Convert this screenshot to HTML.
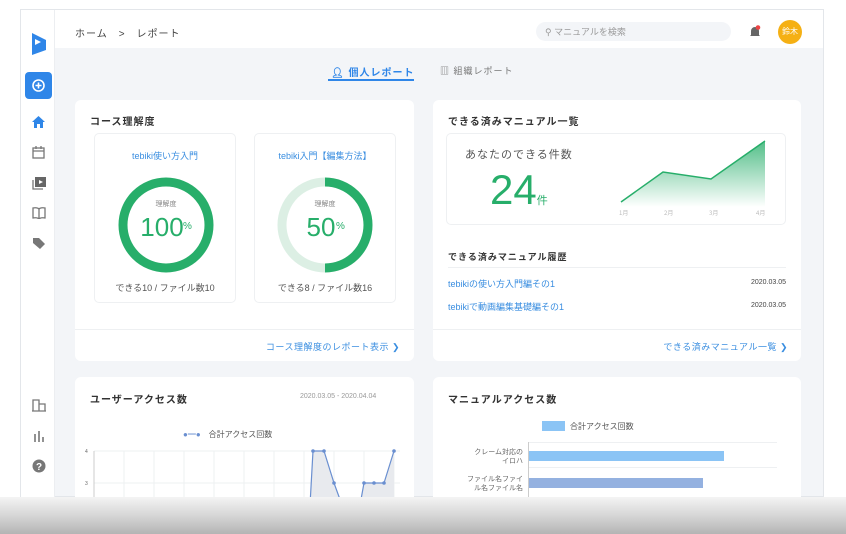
<!DOCTYPE html>
<html><head><meta charset="utf-8"><style>
*{margin:0;padding:0;box-sizing:border-box}
body{width:846px;height:534px;background:#fff;position:relative;overflow:hidden;font-family:"Liberation Sans","Noto Sans CJK JP",sans-serif;color:#333}
.a{position:absolute}
.card{position:absolute;background:#fff;border-radius:6px}
.t{font-size:10px;font-weight:bold;color:#333;letter-spacing:1px}
.blue{color:#3a8ee0}
</style></head><body>
<div class="a" style="left:20px;top:9px;width:804px;height:488px;border:1px solid #e3e6ea;background:#f3f5f8"></div>
<div class="a" style="left:21px;top:10px;width:34px;height:487px;background:#fff;border-right:1px solid #eceef1"></div>
<div class="a" style="left:55px;top:10px;width:768px;height:38px;background:#fff"></div>
<svg class="a" style="left:31px;top:32px" width="16" height="24" viewBox="0 0 16 24"><path d="M1 1 L15 8 L15 18 L1 23 Z" fill="#2f86e8"/><path d="M4 7 L10 10 L4 13Z" fill="#fff"/></svg>
<div class="a" style="left:25px;top:72px;width:27px;height:27px;background:#2f86e8;border-radius:4px"></div>
<svg class="a" style="left:31px;top:78px" width="15" height="15" viewBox="0 0 15 15"><circle cx="7.5" cy="7.5" r="5.5" fill="none" stroke="#fff" stroke-width="1.6"/><path d="M7.5 4.5v6M4.5 7.5h6" stroke="#fff" stroke-width="1.6"/></svg>
<svg class="a" style="left:32px;top:116px" width="13" height="12" viewBox="0 0 13 12"><path d="M6.5 0L0 6h2v6h3V8h3v4h3V6h2z" fill="#2f86e8"/></svg>
<svg class="a" style="left:32px;top:146px" width="13" height="13" viewBox="0 0 13 13"><rect x="1" y="2" width="11" height="10" fill="none" stroke="#777" stroke-width="1.3"/><path d="M1 5h11M4 0v3M9 0v3" stroke="#777" stroke-width="1.3"/></svg>
<svg class="a" style="left:32px;top:177px" width="14" height="13" viewBox="0 0 14 13"><rect x="3" y="0" width="11" height="10" fill="#666"/><path d="M1 3v9h10" fill="none" stroke="#777" stroke-width="1.3"/><path d="M7 3l4 2-4 2z" fill="#fff"/></svg>
<svg class="a" style="left:32px;top:207px" width="14" height="12" viewBox="0 0 14 12"><path d="M7 2C5 0 2 1 1 1v10c1 0 4-1 6 1 2-2 5-1 6-1V1C12 1 9 0 7 2zM7 2v10" fill="none" stroke="#777" stroke-width="1.3"/></svg>
<svg class="a" style="left:32px;top:237px" width="14" height="13" viewBox="0 0 14 13"><path d="M1 1h6l6 6-5 5-7-6z" fill="#777"/></svg>
<svg class="a" style="left:32px;top:399px" width="14" height="13" viewBox="0 0 14 13"><path d="M1 12V1h6v11M7 5h6v7M0 12h14" fill="none" stroke="#777" stroke-width="1.3"/></svg>
<svg class="a" style="left:33px;top:430px" width="12" height="12" viewBox="0 0 12 12"><path d="M2 4v8M6 1v11M10 7v5" stroke="#777" stroke-width="1.6"/></svg>
<svg class="a" style="left:32px;top:459px" width="14" height="14" viewBox="0 0 14 14"><circle cx="7" cy="7" r="6.5" fill="#777"/><text x="7" y="11" font-size="10" font-weight="bold" fill="#fff" text-anchor="middle" font-family="Liberation Sans">?</text></svg>
<div class="a" style="left:75px;top:25px;font-size:10px;color:#444;letter-spacing:1px">ホーム　&gt;　レポート</div>
<div class="a" style="left:536px;top:22px;width:195px;height:19px;background:#f3f5f8;border-radius:10px"></div>
<div class="a" style="left:545px;top:25px;font-size:9px;color:#999">⚲ マニュアルを検索</div>
<svg class="a" style="left:749px;top:25px" width="12" height="13" viewBox="0 0 12 13"><path d="M2 10V6a4 4 0 018 0v4l1 1H1z" fill="#666"/><circle cx="9" cy="2.5" r="2.3" fill="#e44"/></svg>
<div class="a" style="left:778px;top:20px;width:24px;height:24px;border-radius:50%;background:#f5b014;color:#fff;font-size:8px;text-align:center;line-height:24px">鈴木</div>
<div class="a" style="left:331px;top:64px;font-size:10px;font-weight:bold;color:#2f86e8;letter-spacing:1px">👤︎ 個人レポート</div>
<div class="a" style="left:328px;top:79px;width:86px;height:2px;background:#2f86e8"></div>
<div class="a" style="left:440px;top:64px;font-size:9px;color:#777;letter-spacing:1px">▥ 組織レポート</div>
<div class="card" style="left:75px;top:100px;width:339px;height:261px"></div>
<div class="a t" style="left:90px;top:113px">コース理解度</div>
<div class="a" style="left:94px;top:133px;width:142px;height:170px;border:1px solid #eef0f2;border-radius:5px"></div>
<div class="a" style="left:254px;top:133px;width:142px;height:170px;border:1px solid #eef0f2;border-radius:5px"></div>
<div class="a blue" style="left:94px;top:149px;width:142px;text-align:center;font-size:9px">tebiki使い方入門</div>
<div class="a blue" style="left:254px;top:149px;width:142px;text-align:center;font-size:9px">tebiki入門【編集方法】</div>
<svg class="a" style="left:116px;top:175px" width="100" height="100"><circle cx="50" cy="50" r="43" fill="none" stroke="#27ae6a" stroke-width="9"/><text x="50" y="31" font-size="7" fill="#888" text-anchor="middle" font-family="Noto Sans CJK JP">理解度</text><text x="46" y="61" font-size="26" fill="#27ae6a" text-anchor="middle" font-family="Liberation Sans">100</text><text x="67" y="54" font-size="10" fill="#27ae6a" font-family="Liberation Sans">%</text></svg>
<svg class="a" style="left:275px;top:175px" width="100" height="100"><circle cx="50" cy="50" r="43" fill="none" stroke="#dcefe4" stroke-width="9"/><path d="M50 7 A43 43 0 0 1 50 93" fill="none" stroke="#27ae6a" stroke-width="9"/><text x="50" y="31" font-size="7" fill="#888" text-anchor="middle" font-family="Noto Sans CJK JP">理解度</text><text x="46" y="61" font-size="26" fill="#27ae6a" text-anchor="middle" font-family="Liberation Sans">50</text><text x="61" y="54" font-size="10" fill="#27ae6a" font-family="Liberation Sans">%</text></svg>
<div class="a" style="left:94px;top:281px;width:142px;text-align:center;font-size:9px;color:#555">できる10 / ファイル数10</div>
<div class="a" style="left:254px;top:281px;width:142px;text-align:center;font-size:9px;color:#555">できる8 / ファイル数16</div>
<div class="a" style="left:75px;top:329px;width:339px;height:1px;background:#eef0f2"></div>
<div class="a blue" style="left:200px;top:340px;width:200px;text-align:right;font-size:9px;letter-spacing:.5px">コース理解度のレポート表示 ❯</div>
<div class="card" style="left:433px;top:100px;width:368px;height:261px"></div>
<div class="a t" style="left:448px;top:113px">できる済みマニュアル一覧</div>
<div class="a" style="left:446px;top:133px;width:340px;height:92px;border:1px solid #eef0f2;border-radius:5px"></div>
<div class="a" style="left:465px;top:146px;font-size:11px;color:#555;letter-spacing:1px">あなたのできる件数</div>
<div class="a" style="left:490px;top:169px;font-size:42px;color:#27ae6a;line-height:42px">24<span style="font-size:11px">件</span></div>
<svg class="a" style="left:615px;top:135px" width="160" height="85"><defs><linearGradient id="g" x1="0" y1="0" x2="0" y2="1"><stop offset="0" stop-color="#27ae6a" stop-opacity=".8"/><stop offset="1" stop-color="#27ae6a" stop-opacity="0"/></linearGradient></defs><path d="M6 67 L48 37 L96 44 L150 6 L150 72 L6 72Z" fill="url(#g)"/><path d="M6 67 L48 37 L96 44 L150 6" fill="none" stroke="#27ae6a" stroke-width="1.5"/><g font-size="6" fill="#bbb" font-family="Noto Sans CJK JP"><text x="4" y="80">1月</text><text x="49" y="80">2月</text><text x="94" y="80">3月</text><text x="141" y="80">4月</text></g></svg>
<div class="a" style="left:448px;top:250px;font-size:9px;font-weight:bold;letter-spacing:1px">できる済みマニュアル履歴</div>
<div class="a" style="left:448px;top:267px;width:338px;height:1px;background:#eef0f2"></div>
<div class="a blue" style="left:448px;top:277px;font-size:9px">tebikiの使い方入門編その1</div>
<div class="a" style="left:700px;top:279px;width:86px;text-align:right;font-size:7px;color:#444">2020.03.05</div>
<div class="a blue" style="left:448px;top:300px;font-size:9px">tebikiで動画編集基礎編その1</div>
<div class="a" style="left:700px;top:302px;width:86px;text-align:right;font-size:7px;color:#444">2020.03.05</div>
<div class="a" style="left:433px;top:329px;width:368px;height:1px;background:#eef0f2"></div>
<div class="a blue" style="left:580px;top:340px;width:208px;text-align:right;font-size:9px;letter-spacing:.5px">できる済みマニュアル一覧 ❯</div>
<div class="card" style="left:75px;top:377px;width:339px;height:130px"></div>
<div class="a t" style="left:90px;top:391px">ユーザーアクセス数</div>
<div class="a" style="left:300px;top:393px;font-size:7px;color:#999">2020.03.05 - 2020.04.04</div>
<div class="a" style="left:183px;top:429px;font-size:8px;color:#555"><span style="color:#6a8fd0">●━●</span>　合計アクセス回数</div>
<svg class="a" style="left:80px;top:445px" width="330" height="60"><g stroke="#eef0f2"><path d="M14 6h306M14 38h306"/><path d="M44 6v55M74 6v55M104 6v55M134 6v55M164 6v55M194 6v55M224 6v55M254 6v55M284 6v55M314 6v55"/></g><path d="M14 6v55" stroke="#ccc"/><text x="5" y="8" font-size="5" fill="#666">4</text><text x="5" y="40" font-size="5" fill="#666">3</text><path d="M230 60 L233 6 L244 6 L254 38 L262 60 L280 60 L284 38 L294 38 L304 38 L314 6 L314 60Z" fill="#e8eaee"/><path d="M230 60 L233 6 L244 6 L254 38 L262 60 M280 60 L284 38 L294 38 L304 38 L314 6" fill="none" stroke="#6a8fd0" stroke-width="1.2"/><g fill="#6a8fd0"><circle cx="233" cy="6" r="1.8"/><circle cx="244" cy="6" r="1.8"/><circle cx="254" cy="38" r="1.8"/><circle cx="284" cy="38" r="1.8"/><circle cx="294" cy="38" r="1.8"/><circle cx="304" cy="38" r="1.8"/><circle cx="314" cy="6" r="1.8"/></g></svg>
<div class="card" style="left:433px;top:377px;width:368px;height:130px"></div>
<div class="a t" style="left:448px;top:391px">マニュアルアクセス数</div>
<div class="a" style="left:542px;top:421px;width:23px;height:10px;background:#8bc4f5"></div>
<div class="a" style="left:570px;top:421px;font-size:8px;color:#555">合計アクセス回数</div>
<div class="a" style="left:529px;top:442px;width:248px;height:1px;background:#eef0f2"></div>
<div class="a" style="left:529px;top:467px;width:248px;height:1px;background:#eef0f2"></div>
<div class="a" style="left:528px;top:442px;width:1px;height:60px;background:#ccc"></div>
<div class="a" style="left:529px;top:451px;width:195px;height:10px;background:#8bc4f5"></div>
<div class="a" style="left:529px;top:478px;width:174px;height:10px;background:#94b1e0"></div>
<div class="a" style="left:455px;top:448px;width:68px;text-align:right;font-size:7px;color:#666;line-height:9px">クレーム対応の<br>イロハ</div>
<div class="a" style="left:455px;top:475px;width:68px;text-align:right;font-size:7px;color:#666;line-height:9px">ファイル名ファイ<br>ル名ファイル名</div>
<div class="a" style="left:0;top:497px;width:846px;height:37px;background:linear-gradient(#f4f4f4,#d6d6d6 50%,#b4b4b4)"></div>
</body></html>
